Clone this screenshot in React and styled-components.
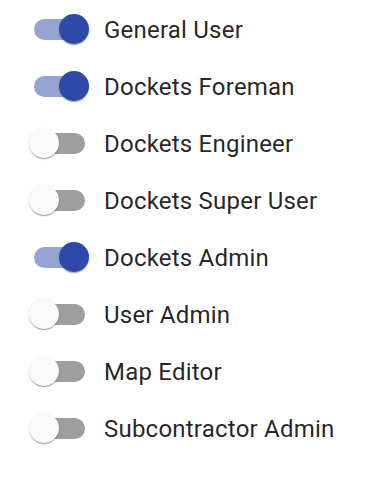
import React, { useState } from 'react';
import styled, { createGlobalStyle } from 'styled-components';

const GlobalStyle = createGlobalStyle`
    body {
        margin: 0;
        background: #ffffff;
        font-family: Roboto, "Liberation Sans", sans-serif;
    }
`;

const List = styled.div`
    display: flex;
    flex-direction: column;
    padding-top: 1px;
`;

const Row = styled.label`
    display: flex;
    align-items: center;
    height: 57px;
    cursor: pointer;
`;

const SwitchBox = styled.span`
    position: relative;
    width: 90px;
    height: 57px;
    flex-shrink: 0;
    display: flex;
    align-items: center;
    margin-left: 14px;
`;

const Track = styled.span`
    width: 51px;
    height: 21px;
    margin-left: 20px;
    border-radius: 11px;
    background-color: ${(props) => (props.on ? '#2d4aa9' : '#000000')};
    opacity: ${(props) => (props.on ? 0.5 : 0.38)};
`;

const Thumb = styled.span`
    position: absolute;
    top: 13px;
    left: ${(props) => (props.on ? '45px' : '15px')};
    width: 30px;
    height: 30px;
    border-radius: 50%;
    background-color: ${(props) => (props.on ? '#2d4aa9' : '#fafafa')};
    box-shadow: 0 2px 1px -1px rgba(0, 0, 0, 0.2), 0 1px 1px 0 rgba(0, 0, 0, 0.14),
        0 1px 3px 0 rgba(0, 0, 0, 0.12);
`;

const Label = styled.span`
    font-size: 24px;
    color: rgba(0, 0, 0, 0.87);
    letter-spacing: 0.22px;
`;

const roles = [
    ['General User', true],
    ['Dockets Foreman', true],
    ['Dockets Engineer', false],
    ['Dockets Super User', false],
    ['Dockets Admin', true],
    ['User Admin', false],
    ['Map Editor', false],
    ['Subcontractor Admin', false],
];

const RoleSwitch = ({ name, initial }) => {
    const [on, setOn] = useState(initial);
    return (
        <Row onClick={() => setOn(!on)}>
            <SwitchBox>
                <Track on={on ? 1 : 0} />
                <Thumb on={on ? 1 : 0} />
            </SwitchBox>
            <Label>{name}</Label>
        </Row>
    );
};

export default function App() {
    return (
        <>
            <GlobalStyle />
            <List>
                {roles.map(([name, on]) => (
                    <RoleSwitch key={name} name={name} initial={on} />
                ))}
            </List>
        </>
    );
}
